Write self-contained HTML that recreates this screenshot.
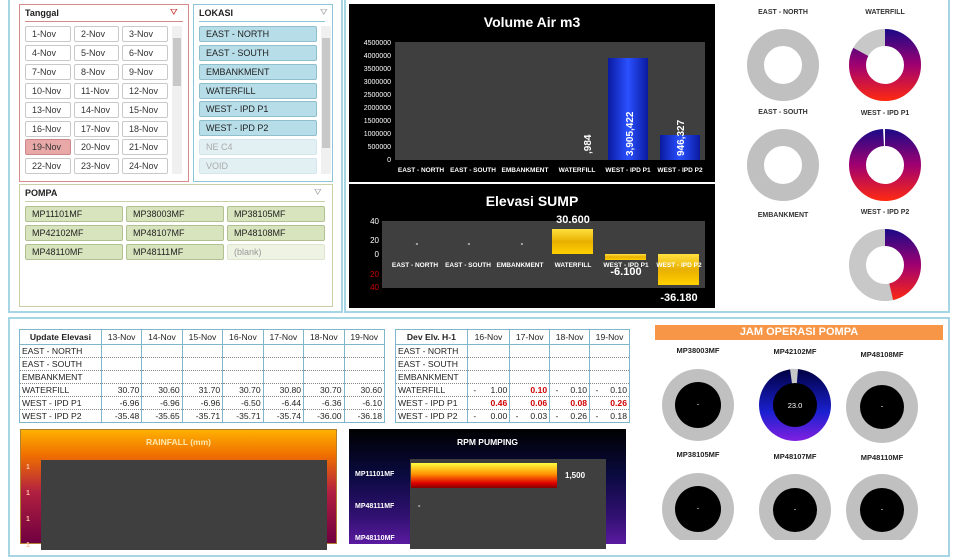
<!DOCTYPE html>
<html><head><meta charset="utf-8"><style>
*{margin:0;padding:0;box-sizing:border-box}
body{width:960px;height:540px;background:#fff;position:relative;overflow:hidden;font-family:"Liberation Sans",Arial,sans-serif;font-size:9px;color:#222}
.a{position:absolute}
.btn{position:absolute;height:16px;border:1px solid #c9c9c9;border-radius:2px;background:#fff;font-size:9px;padding-left:6px;line-height:14px;color:#333}
.lb{background:#b7dde8;border-color:#8fbfcc;color:#222}
.lbf{background:#e2f0f4;border-color:#d2e6ec;color:#aaa}
.gb{background:#d7e4bd;border-color:#b0c090;color:#222}
.gbf{background:#eef3e4;border-color:#dde5cf;color:#999}
.hd{position:absolute;font-weight:bold;font-size:9px}
table{border-collapse:collapse;position:absolute;font-size:8.6px}
td{border-left:1px solid #7fb6cc;border-right:1px solid #7fb6cc;border-bottom:1px dotted #888;height:13px;padding:0 2px;white-space:nowrap}
tr:first-child td{border:1px solid #7fb6cc;height:15px;text-align:center}
tr:last-child td{border-bottom:1px solid #7fb6cc}
td.n{text-align:right}
.r{color:#d00000;font-weight:bold}
.wt{color:#fff;font-weight:bold}
</style></head><body>

<div class="a" style="left:8px;top:-2px;width:335px;height:315px;border:2px solid #a6d6e4"></div>
<div class="a" style="left:344px;top:-2px;width:606px;height:315px;border:2px solid #a6d6e4"></div>
<div class="a" style="left:8px;top:317px;width:942px;height:240px;border:2px solid #a6d6e4"></div>

<div class="a" style="left:19px;top:4px;width:170px;height:178px;border:1px solid #d48a8a"></div>
<div class="hd" style="left:25px;top:8px">Tanggal</div>
<div class="a" style="left:170px;top:7px;color:#c33;font-size:9px">⛛</div>
<div class="a" style="left:25px;top:21px;width:158px;border-top:1px solid #d48a8a"></div>
<div class="a" style="left:172px;top:26px;width:10px;height:148px;background:#f0f0f0"></div>
<div class="a" style="left:173px;top:38px;width:8px;height:48px;background:#c8c8c8"></div>

<div class="a" style="left:193px;top:4px;width:140px;height:178px;border:1px solid #8cc6d8"></div>
<div class="hd" style="left:199px;top:8px">LOKASI</div>
<div class="a" style="left:320px;top:7px;color:#aaa">⛛</div>
<div class="a" style="left:199px;top:21px;width:126px;border-top:1px solid #8cc6d8"></div>
<div class="a" style="left:321px;top:26px;width:10px;height:148px;background:#f0f0f0"></div>
<div class="a" style="left:322px;top:38px;width:8px;height:110px;background:#c8c8c8"></div>

<div class="a" style="left:19px;top:184px;width:314px;height:123px;border:1px solid #c8d0a8"></div>
<div class="hd" style="left:25px;top:188px">POMPA</div>
<div class="a" style="left:314px;top:187px;color:#aaa">⛛</div>
<div class="a" style="left:25px;top:201px;width:300px;border-top:1px solid #c8d0a8"></div>

<div class="btn" style="left:25px;top:26px;width:46px">1-Nov</div><div class="btn" style="left:74px;top:26px;width:45px">2-Nov</div><div class="btn" style="left:122px;top:26px;width:46px">3-Nov</div>
<div class="btn" style="left:25px;top:45px;width:46px">4-Nov</div><div class="btn" style="left:74px;top:45px;width:45px">5-Nov</div><div class="btn" style="left:122px;top:45px;width:46px">6-Nov</div>
<div class="btn" style="left:25px;top:64px;width:46px">7-Nov</div><div class="btn" style="left:74px;top:64px;width:45px">8-Nov</div><div class="btn" style="left:122px;top:64px;width:46px">9-Nov</div>
<div class="btn" style="left:25px;top:83px;width:46px">10-Nov</div><div class="btn" style="left:74px;top:83px;width:45px">11-Nov</div><div class="btn" style="left:122px;top:83px;width:46px">12-Nov</div>
<div class="btn" style="left:25px;top:102px;width:46px">13-Nov</div><div class="btn" style="left:74px;top:102px;width:45px">14-Nov</div><div class="btn" style="left:122px;top:102px;width:46px">15-Nov</div>
<div class="btn" style="left:25px;top:121px;width:46px">16-Nov</div><div class="btn" style="left:74px;top:121px;width:45px">17-Nov</div><div class="btn" style="left:122px;top:121px;width:46px">18-Nov</div>
<div class="btn" style="left:25px;top:139px;width:46px;background:#e8a8a8;border-color:#c88">19-Nov</div><div class="btn" style="left:74px;top:139px;width:45px">20-Nov</div><div class="btn" style="left:122px;top:139px;width:46px">21-Nov</div>
<div class="btn" style="left:25px;top:158px;width:46px">22-Nov</div><div class="btn" style="left:74px;top:158px;width:45px">23-Nov</div><div class="btn" style="left:122px;top:158px;width:46px">24-Nov</div>

<div class="btn lb" style="left:199px;top:26px;width:118px">EAST - NORTH</div>
<div class="btn lb" style="left:199px;top:45px;width:118px">EAST - SOUTH</div>
<div class="btn lb" style="left:199px;top:64px;width:118px">EMBANKMENT</div>
<div class="btn lb" style="left:199px;top:83px;width:118px">WATERFILL</div>
<div class="btn lb" style="left:199px;top:101px;width:118px">WEST - IPD P1</div>
<div class="btn lb" style="left:199px;top:120px;width:118px">WEST - IPD P2</div>
<div class="btn lbf" style="left:199px;top:139px;width:118px">NE C4</div>
<div class="btn lbf" style="left:199px;top:158px;width:118px">VOID</div>

<div class="btn gb" style="left:25px;top:206px;width:98px">MP11101MF</div><div class="btn gb" style="left:126px;top:206px;width:98px">MP38003MF</div><div class="btn gb" style="left:227px;top:206px;width:98px">MP38105MF</div>
<div class="btn gb" style="left:25px;top:225px;width:98px">MP42102MF</div><div class="btn gb" style="left:126px;top:225px;width:98px">MP48107MF</div><div class="btn gb" style="left:227px;top:225px;width:98px">MP48108MF</div>
<div class="btn gb" style="left:25px;top:244px;width:98px">MP48110MF</div><div class="btn gb" style="left:126px;top:244px;width:98px">MP48111MF</div><div class="btn gbf" style="left:227px;top:244px;width:98px">(blank)</div>

<svg class="a" style="left:349px;top:4px" width="366" height="178" font-family="Liberation Sans">
<defs><linearGradient id="bl" x1="0" y1="0" x2="1" y2="0"><stop offset="0" stop-color="#0a1aa0"/><stop offset=".5" stop-color="#2a50ff"/><stop offset="1" stop-color="#0a1aa0"/></linearGradient></defs>
<rect width="366" height="178" fill="#000"/>
<text x="183" y="23" fill="#fff" font-size="14" font-weight="bold" text-anchor="middle">Volume Air m3</text>
<rect x="46" y="38" width="310" height="118" fill="#3f3f3f"/>
<g fill="#fff" font-size="7" text-anchor="end">
<text x="42" y="41">4500000</text><text x="42" y="54">4000000</text><text x="42" y="67">3500000</text><text x="42" y="80">3000000</text><text x="42" y="93">2500000</text><text x="42" y="106">2000000</text><text x="42" y="119">1500000</text><text x="42" y="132">1000000</text><text x="42" y="145">500000</text><text x="42" y="158">0</text></g>
<rect x="259" y="54" width="40" height="102" fill="url(#bl)"/>
<rect x="311" y="131" width="40" height="25" fill="url(#bl)"/>
<g fill="#fff" font-size="10" font-weight="bold">
<text transform="translate(242,150) rotate(-90)">,984</text>
<text transform="translate(284,152) rotate(-90)">3,905,422</text>
<text transform="translate(335,152) rotate(-90)">946,327</text></g>
<g fill="#fff" font-size="6.5" font-weight="bold" text-anchor="middle">
<text x="72" y="168">EAST - NORTH</text><text x="124" y="168">EAST - SOUTH</text><text x="176" y="168">EMBANKMENT</text><text x="228" y="168">WATERFILL</text><text x="279" y="168">WEST - IPD P1</text><text x="331" y="168">WEST - IPD P2</text></g>
</svg>

<svg class="a" style="left:349px;top:184px" width="366" height="124" font-family="Liberation Sans">
<defs><linearGradient id="yl" x1="0" y1="0" x2="0" y2="1"><stop offset="0" stop-color="#ffe040"/><stop offset=".5" stop-color="#e8b000"/><stop offset="1" stop-color="#ffd000"/></linearGradient></defs>
<rect width="366" height="124" fill="#000"/>
<text x="183" y="22" fill="#fff" font-size="14" font-weight="bold" text-anchor="middle">Elevasi SUMP</text>
<rect x="33" y="37" width="323" height="67" fill="#3f3f3f"/>
<g font-size="8" text-anchor="end"><text x="30" y="40" fill="#fff">40</text><text x="30" y="59" fill="#fff">20</text><text x="30" y="73" fill="#fff">0</text><text x="30" y="93" fill="#c00">20</text><text x="30" y="106" fill="#c00">40</text></g>
<rect x="203" y="45" width="41" height="25" fill="url(#yl)"/>
<rect x="256" y="70" width="41" height="6" fill="url(#yl)"/>
<rect x="309" y="70" width="41" height="31" fill="url(#yl)"/>
<g fill="#fff" font-weight="bold" text-anchor="middle">
<text x="224" y="39" font-size="11">30.600</text>
<text x="277" y="91" font-size="11">-6.100</text>
<text x="330" y="117" font-size="11">-36.180</text>
<text x="68" y="62" font-size="8">-</text><text x="120" y="62" font-size="8">-</text><text x="173" y="62" font-size="8">-</text></g>
<g fill="#fff" font-size="6.5" font-weight="bold" text-anchor="middle">
<text x="66" y="83">EAST - NORTH</text><text x="119" y="83">EAST - SOUTH</text><text x="171" y="83">EMBANKMENT</text><text x="224" y="83">WATERFILL</text><text x="277" y="83">WEST - IPD P1</text><text x="330" y="83">WEST - IPD P2</text></g>
</svg>

<svg class="a" style="left:720px;top:0" width="228" height="312" font-family="Liberation Sans">
<defs><linearGradient id="dg" gradientUnits="userSpaceOnUse" x1="36" y1="0" x2="-36" y2="0"><stop offset="0" stop-color="#1a0a88"/><stop offset=".5" stop-color="#a00070"/><stop offset="1" stop-color="#ff2a10"/></linearGradient></defs>
<g font-size="7" font-weight="bold" fill="#333" text-anchor="middle">
<text x="63" y="14">EAST - NORTH</text><text x="165" y="14">WATERFILL</text>
<text x="63" y="114">EAST - SOUTH</text><text x="165" y="115">WEST - IPD P1</text>
<text x="63" y="217">EMBANKMENT</text><text x="165" y="214">WEST - IPD P2</text></g>
<circle cx="63" cy="65" r="27.5" fill="none" stroke="#c0c0c0" stroke-width="17"/>
<circle cx="63" cy="165" r="27.5" fill="none" stroke="#c0c0c0" stroke-width="17"/>
<g transform="translate(165,65) rotate(-90)"><circle r="27.5" fill="none" stroke="#c8c8c8" stroke-width="17"/><circle r="27.5" fill="none" stroke="url(#dg)" stroke-width="17" stroke-dasharray="143 200"/></g>
<g transform="translate(165,165) rotate(-90)"><circle r="27.5" fill="none" stroke="url(#dg)" stroke-width="17" stroke-dasharray="171 200"/></g>
<g transform="translate(165,265) rotate(-90)"><circle r="27.5" fill="none" stroke="#c8c8c8" stroke-width="17"/><circle r="27.5" fill="none" stroke="url(#dg)" stroke-width="17" stroke-dasharray="80 200"/></g>
</svg>

<table style="left:19px;top:329px;width:366px">
<tr><td style="font-weight:bold">Update Elevasi</td><td>13-Nov</td><td>14-Nov</td><td>15-Nov</td><td>16-Nov</td><td>17-Nov</td><td>18-Nov</td><td>19-Nov</td></tr>
<tr><td>EAST - NORTH</td><td></td><td></td><td></td><td></td><td></td><td></td><td></td></tr>
<tr><td>EAST - SOUTH</td><td></td><td></td><td></td><td></td><td></td><td></td><td></td></tr>
<tr><td>EMBANKMENT</td><td></td><td></td><td></td><td></td><td></td><td></td><td></td></tr>
<tr><td>WATERFILL</td><td class="n">30.70</td><td class="n">30.60</td><td class="n">31.70</td><td class="n">30.70</td><td class="n">30.80</td><td class="n">30.70</td><td class="n">30.60</td></tr>
<tr><td>WEST - IPD P1</td><td class="n">-6.96</td><td class="n">-6.96</td><td class="n">-6.96</td><td class="n">-6.50</td><td class="n">-6.44</td><td class="n">-6.36</td><td class="n">-6.10</td></tr>
<tr><td>WEST - IPD P2</td><td class="n">-35.48</td><td class="n">-35.65</td><td class="n">-35.71</td><td class="n">-35.71</td><td class="n">-35.74</td><td class="n">-36.00</td><td class="n">-36.18</td></tr>
</table>
<table style="left:395px;top:329px;width:235px">
<tr><td style="font-weight:bold">Dev Elv. H-1</td><td>16-Nov</td><td>17-Nov</td><td>18-Nov</td><td>19-Nov</td></tr>
<tr><td>EAST - NORTH</td><td></td><td></td><td></td><td></td></tr>
<tr><td>EAST - SOUTH</td><td></td><td></td><td></td><td></td></tr>
<tr><td>EMBANKMENT</td><td></td><td></td><td></td><td></td></tr>
<tr><td>WATERFILL</td><td class="n">-&nbsp;&nbsp;&nbsp;&nbsp;&nbsp;&nbsp;1.00</td><td class="n r">0.10</td><td class="n">-&nbsp;&nbsp;&nbsp;&nbsp;&nbsp;0.10</td><td class="n">-&nbsp;&nbsp;&nbsp;&nbsp;&nbsp;0.10</td></tr>
<tr><td>WEST - IPD P1</td><td class="n r">0.46</td><td class="n r">0.06</td><td class="n r">0.08</td><td class="n r">0.26</td></tr>
<tr><td>WEST - IPD P2</td><td class="n">-&nbsp;&nbsp;&nbsp;&nbsp;&nbsp;&nbsp;0.00</td><td class="n">-&nbsp;&nbsp;&nbsp;&nbsp;&nbsp;0.03</td><td class="n">-&nbsp;&nbsp;&nbsp;&nbsp;&nbsp;0.26</td><td class="n">-&nbsp;&nbsp;&nbsp;&nbsp;&nbsp;0.18</td></tr>
</table>

<div class="a" style="left:20px;top:429px;width:317px;height:115px;background:linear-gradient(#ffb000 0%,#f07000 22%,#b02040 55%,#700040 100%);border:1px solid #b08030"></div>
<div class="a wt" style="left:20px;top:437px;width:317px;text-align:center;font-size:8.5px;color:#ffe8b0">RAINFALL (mm)</div>
<div class="a" style="left:41px;top:460px;width:286px;height:90px;background:#3f3f3f"></div>
<div class="a" style="left:26px;top:455px;color:#ffc0a0;font-size:7px;line-height:26px;font-weight:bold">1<br>1<br>1<br>1</div>

<div class="a" style="left:349px;top:429px;width:277px;height:115px;background:linear-gradient(#000 0%,#0a0a40 40%,#301070 75%,#5a1aa0 100%)"></div>
<div class="a wt" style="left:349px;top:437px;width:277px;text-align:center;font-size:8.5px">RPM PUMPING</div>
<div class="a" style="left:410px;top:459px;width:196px;height:90px;background:#3f3f3f"></div>
<div class="a" style="left:411px;top:463px;width:146px;height:25px;background:linear-gradient(#ffff40,#ff9000 45%,#e00000 80%,#800000)"></div>
<div class="a wt" style="left:565px;top:471px;font-size:8px">1,500</div>
<div class="a wt" style="left:355px;top:471px;font-size:7px">MP11101MF</div>
<div class="a wt" style="left:355px;top:503px;font-size:7px">MP48111MF</div>
<div class="a wt" style="left:418px;top:503px;font-size:7px">-</div>
<div class="a wt" style="left:355px;top:535px;font-size:7px">MP48110MF</div>

<div class="a" style="left:655px;top:325px;width:288px;height:15px;background:#f79646;color:#fff;font-weight:bold;font-size:11px;text-align:center;line-height:15px">JAM OPERASI POMPA</div>
<svg class="a" style="left:650px;top:342px" width="300" height="198" font-family="Liberation Sans">
<defs><linearGradient id="jg" x1="0" y1="0" x2="0" y2="1"><stop offset="0" stop-color="#000040"/><stop offset=".6" stop-color="#1a20d0"/><stop offset="1" stop-color="#8020e0"/></linearGradient></defs>
<g font-size="7.5" font-weight="bold" fill="#222" text-anchor="middle">
<text x="48" y="11">MP38003MF</text><text x="145" y="12">MP42102MF</text><text x="232" y="15">MP48108MF</text>
<text x="48" y="115">MP38105MF</text><text x="145" y="117">MP48107MF</text><text x="232" y="118">MP48110MF</text></g>
<g fill="#c0c0c0"><circle cx="48" cy="63" r="36"/><circle cx="232" cy="65" r="36"/><circle cx="48" cy="167" r="36"/><circle cx="145" cy="168" r="36"/><circle cx="232" cy="168" r="36"/></g>
<circle cx="145" cy="63" r="36" fill="url(#jg)"/>
<path d="M145 63 L140 27 A36 36 0 0 1 148 27 Z" fill="#c8c8c8"/>
<g fill="#000"><circle cx="48" cy="63" r="23"/><circle cx="145" cy="63" r="22"/><circle cx="232" cy="65" r="22"/><circle cx="48" cy="167" r="23"/><circle cx="145" cy="168" r="22"/><circle cx="232" cy="168" r="22"/></g>
<text x="145" y="66" fill="#fff" font-size="7.5" text-anchor="middle">23.0</text>
<g fill="#888"><rect x="47" y="62" width="2" height="1"/><rect x="231" y="64" width="2" height="1"/><rect x="47" y="166" width="2" height="1"/><rect x="144" y="167" width="2" height="1"/><rect x="231" y="167" width="2" height="1"/></g>
</svg>
</body></html>
